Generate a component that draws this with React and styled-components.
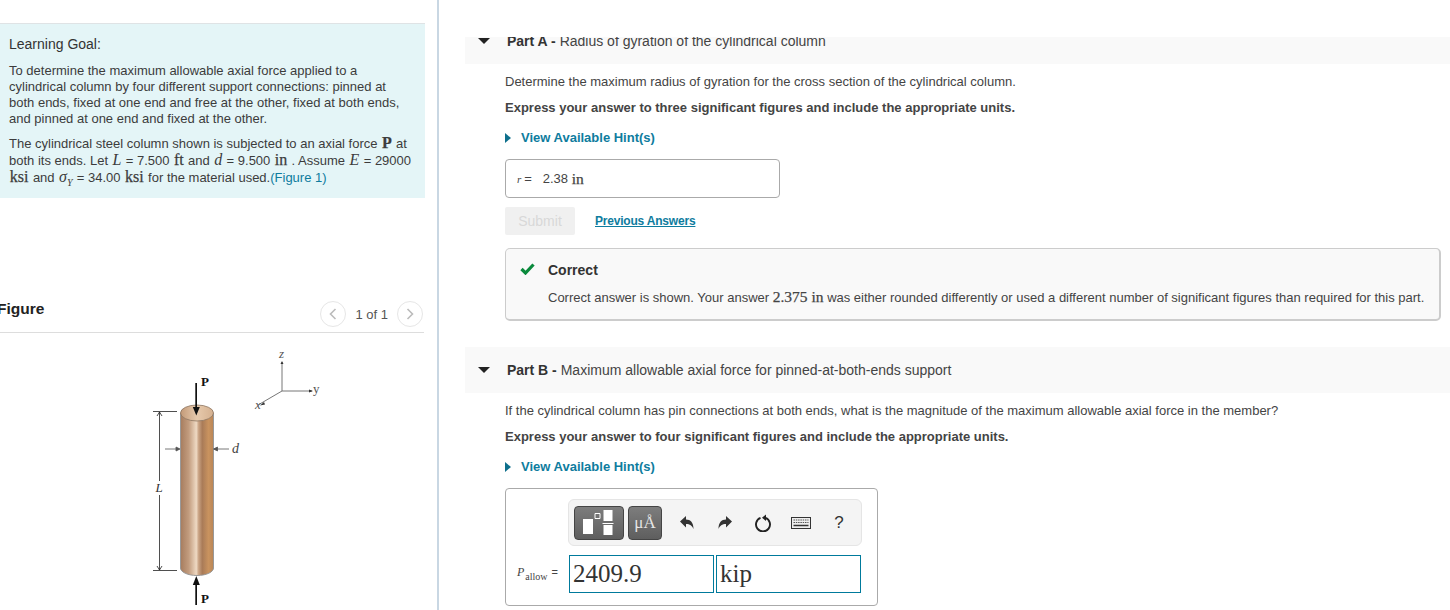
import React from 'react';
import styled, { createGlobalStyle } from 'styled-components';

const GlobalStyle = createGlobalStyle`
  html, body {
    margin: 0;
    padding: 0;
    background: #fff;
    overflow: hidden;
  }
  body {
    font-family: "Liberation Sans", Arial, sans-serif;
    font-size: 13px;
    color: #333;
  }
`;

const Page = styled.div`
  display: flex;
  width: 1450px;
  height: 610px;
  overflow: hidden;
`;

const LeftPane = styled.div`
  width: 437px;
  flex: none;
  padding-top: 23px;
  border-right: 2px solid #c9d7e3;
`;

const Goal = styled.div`
  width: 425px;
  height: 175px;
  box-sizing: border-box;
  background: #e4f5f7;
  border-top: 1px solid #dfe3e5;
  padding: 12px 12px 0 9px;
  line-height: 16px;
`;

const GoalTitle = styled.div`
  font-size: 14px;
  line-height: 16px;
  margin-bottom: 11px;
  color: #333;
`;

const GoalText = styled.p`
  margin: 0 0 8px;
  line-height: ${(p) => p.$leading || 16}px;
  color: #3c3c3c;
`;

const M = styled.span`
  font-family: "Liberation Serif", serif;
  font-size: ${(p) => (p.$inline ? 15.5 : 16)}px;
  font-style: ${(p) => (p.$roman ? 'normal' : 'italic')};
  font-weight: ${(p) => (p.$bold ? 700 : 400)};
  line-height: 0;
  margin: 0 ${(p) => (p.$inline ? 0 : 0.8)}px;
  -webkit-text-stroke: ${(p) => (p.$roman ? '0.25px' : '0')};
`;

const Sub = styled.sub`
  font-size: 10px;
  line-height: 0;
`;

const Link = styled.a`
  color: #0e7c9e;
`;

const FigureHead = styled.div`
  width: 427px;
  margin-left: -3px;
  height: 36px;
  margin-top: 99px;
  border-bottom: 1px solid #ddd;
  display: flex;
  align-items: center;
  justify-content: space-between;
  box-sizing: border-box;
`;

const FigureTitle = styled.div`
  font-size: 15.5px;
  font-weight: 700;
  color: #222;
  margin-top: -12px;
`;

const Pager = styled.div`
  display: flex;
  align-items: center;
  gap: 9px;
  color: #555;
  margin-top: -1px;
  margin-right: 1px;
`;

const PagerButton = styled.span`
  width: 26px;
  height: 26px;
  box-sizing: border-box;
  border: 1px solid #e6e6e6;
  border-radius: 50%;
  display: flex;
  align-items: center;
  justify-content: center;
`;

const FigureBody = styled.div`
  padding: 7px 0 0 120px;
`;

const RightPane = styled.div`
  flex: 1;
  margin-top: 37px;
  padding-left: 26px;
  overflow: hidden;
`;

const PartHead = styled.div`
  height: 46px;
  margin-top: ${(p) => p.$top}px;
  background: #f9f9f9;
  display: flex;
  align-items: center;
  font-size: 14px;
  color: #444;
`;

const PartCaret = styled.span`
  width: 0;
  height: 0;
  margin: 0 17px 0 13px;
  border-left: 6px solid transparent;
  border-right: 6px solid transparent;
  border-top: 6px solid #222;
`;

const PartLabel = styled.b`
  color: #333;
  white-space: pre;
`;

const PartBody = styled.div`
  padding-left: 40px;
`;

const Prompt = styled.div`
  margin-top: 10px;
  line-height: 16px;
  color: #444;
`;

const Instruction = styled.div`
  margin-top: 10px;
  font-weight: 700;
  line-height: 16px;
  color: #444;
`;

const Hint = styled.div`
  margin-top: 14px;
  display: flex;
  align-items: center;
  gap: 10px;
  font-weight: 700;
  line-height: 16px;
  color: #0e7c9e;
`;

const HintCaret = styled.span`
  width: 0;
  height: 0;
  border-top: 5px solid transparent;
  border-bottom: 5px solid transparent;
  border-left: 6px solid #0e6f8c;
`;

const AnswerField = styled.div`
  margin-top: 13px;
  width: 275px;
  height: 39px;
  box-sizing: border-box;
  border: 1px solid #aaa;
  border-radius: 4px;
  display: flex;
  align-items: center;
  padding-left: 11px;
  color: #444;
  white-space: pre;
`;

const SmallVar = styled.i`
  font-family: "Liberation Serif", serif;
  font-size: 11px;
  margin-right: 3px;
`;

const Actions = styled.div`
  margin-top: 9px;
  display: flex;
  align-items: center;
  gap: 20px;
`;

const SubmitButton = styled.span`
  width: 70px;
  height: 28px;
  background: #f0f0f0;
  border-radius: 2px;
  color: #d8d8d8;
  font-size: 14px;
  display: flex;
  align-items: center;
  justify-content: center;
`;

const PrevLink = styled.a`
  color: #0e7c9e;
  font-size: 12px;
  font-weight: 700;
  letter-spacing: -0.2px;
  text-decoration: underline;
`;

const Feedback = styled.div`
  margin-top: 13px;
  width: 936px;
  height: 73px;
  box-sizing: border-box;
  background: #f9f9f9;
  border: 1px solid #ccc;
  border-right-width: 2px;
  border-bottom-width: 2px;
  border-radius: 5px;
  display: grid;
  grid-template-columns: 28px 1fr;
  padding: 13px 0 0 14px;
`;

const CheckSlot = styled.div`
  padding-top: 1px;
`;

const FeedbackTitle = styled.div`
  font-weight: 700;
  font-size: 14px;
  line-height: 16px;
  color: #333;
`;

const FeedbackText = styled.div`
  margin-top: 12px;
  line-height: 16px;
  color: #444;
  white-space: nowrap;
`;

const AnswerBox = styled.div`
  margin-top: 13px;
  width: 373px;
  height: 118px;
  box-sizing: border-box;
  border: 1px solid #aaa;
  border-radius: 4px;
  display: grid;
  grid-template-columns: 62px 294px;
  grid-template-rows: 47px 38px;
  row-gap: 9px;
  padding-top: 10px;
`;

const Toolbar = styled.div`
  grid-column: 2;
  box-sizing: border-box;
  background: #f4f4f4;
  border: 1px solid #e5e5e5;
  border-radius: 6px;
  display: flex;
  align-items: center;
  padding-left: 5px;
`;

const ToolButton = styled.span`
  width: ${(p) => p.$w}px;
  height: 34px;
  box-sizing: border-box;
  margin-right: ${(p) => p.$gap}px;
  border: 1px solid #444;
  border-radius: 4px;
  background: linear-gradient(#7d7d7d, #5e5e5e);
  color: #e6e6e6;
  font-family: "Liberation Serif", serif;
  font-size: 17px;
  display: flex;
  align-items: center;
  justify-content: center;
`;

const ToolIcon = styled.span`
  width: 38px;
  flex: none;
  display: flex;
  align-items: center;
  justify-content: center;
  color: #333;
  font-size: 17px;
`;

const RowLabel = styled.div`
  display: flex;
  align-items: center;
  justify-content: flex-end;
  padding: 0 10px 4px 0;
  font-size: 11px;
  color: #444;
  white-space: nowrap;
`;

const LabelVar = styled.i`
  font-family: "Liberation Serif", serif;
  font-size: 12px;
`;

const LabelSub = styled.span`
  font-family: "Liberation Serif", serif;
  font-size: 10px;
  position: relative;
  top: 4px;
  margin: 0 4px 0 1px;
`;

const InputRow = styled.div`
  display: flex;
  gap: 2px;
  margin-left: 1px;
`;

const MathInput = styled.div`
  width: 145px;
  height: 38px;
  box-sizing: border-box;
  border: 1px solid #007a9c;
  padding-left: 3px;
  font-family: "Liberation Serif", serif;
  font-size: 25px;
  line-height: 36px;
  color: #333;
`;

const Column = () => (
  <svg width="220" height="270" viewBox="120 340 220 270" fontFamily="Liberation Serif, serif">
    <defs>
      <linearGradient id="rod" x1="0" x2="1" y1="0" y2="0">
        <stop offset="0" stopColor="#a67c5e" />
        <stop offset="0.25" stopColor="#c29c7e" />
        <stop offset="0.48" stopColor="#eed9c3" />
        <stop offset="0.55" stopColor="#c9a384" />
        <stop offset="0.66" stopColor="#a97b58" />
        <stop offset="0.85" stopColor="#c9935f" />
        <stop offset="1" stopColor="#b98556" />
      </linearGradient>
      <linearGradient id="cap" x1="0" x2="1" y1="0" y2="0">
        <stop offset="0" stopColor="#c39a78" />
        <stop offset="0.5" stopColor="#e6c9ac" />
        <stop offset="1" stopColor="#d5b190" />
      </linearGradient>
    </defs>
    <path d="M180.500 413v155c0 4 7 7.500 16.500 7.500s16.500-3.500 16.500-7.500v-155z" fill="url(#rod)" stroke="#999" />
    <ellipse cx="197" cy="413" rx="16.500" ry="8" fill="url(#cap)" stroke="#8d7662" strokeWidth="0.8" />
    <path d="M195.300 383h1.700v28h-1.700z" fill="#111" />
    <path d="M192.800 407h7l-3.500 8.500z" fill="#111" />
    <path d="M195.300 584h1.700v21h-1.700z" fill="#111" />
    <path d="M192.800 585h7l-3.500-9z" fill="#111" />
    <text x="201" y="386" fontSize="13" fontWeight="700" fill="#111">P</text>
    <text x="201" y="603" fontSize="13" fontWeight="700" fill="#111">P</text>
    <g stroke="#222" strokeWidth="0.8" fill="none">
      <path d="M153 411.500h24M153 570.500h24" />
      <path d="M159.500 412v69M159.500 495v75" />
      <path d="M157 416l2.500-4 2.500 4M157 566l2.500 4 2.500-4" />
    </g>
    <text x="155.500" y="492" fontSize="13" fontStyle="italic" fill="#333">L</text>
    <g stroke="#555" strokeWidth="0.8" fill="#555">
      <path d="M165 449h14M229 449h-15" />
      <path d="M180 449l-4-2v4zM213.500 449l4-2v4z" />
    </g>
    <text x="232" y="453" fontSize="14" fontStyle="italic" fill="#444">d</text>
    <g stroke="#666" strokeWidth="0.9" fill="#333">
      <path d="M282 391v-29M282 391h30M282 391l-24 14" fill="none" />
      <path d="M282 361l-1.500 3h3zM313 391l-4-1.500v3zM264 402l-4 3.500 5-1z" stroke="none" />
    </g>
    <text x="279" y="358" fontSize="13" fontStyle="italic" fill="#555">z</text>
    <text x="313" y="393" fontSize="13" fill="#555">y</text>
    <text x="255" y="409" fontSize="13" fontStyle="italic" fill="#555">x</text>
  </svg>
);

const Chevron = ({ right }) => (
  <svg width="8" height="12" viewBox="0 0 8 12" fill="none" stroke="#bbb" strokeWidth="1.6">
    <path d={right ? 'M1.500 1l5 5-5 5' : 'M6.500 1l-5 5 5 5'} />
  </svg>
);

const TemplateGlyph = () => (
  <svg width="32" height="28" viewBox="0 0 32 28">
    <path d="M0 10h10v15H0z" fill="#fff" />
    <path d="M12 4.500h5v5h-5z" fill="none" stroke="#fff" />
    <path d="M20.500 1h9v11h-9zM20.500 16h9v10h-9z" fill="#fff" />
    <path d="M19.500 14.500h11" stroke="#fff" />
  </svg>
);

const UndoIcon = ({ flip }) => (
  <svg width="14" height="14" viewBox="0 0 14 14" style={flip ? { transform: 'scaleX(-1)' } : undefined}>
    <path d="M0 5.500L6 0v3.500c4.500 0 7.500 3 7.500 9.500-1.500-3.500-3.500-5-7.500-5v3.500z" fill="#333" />
  </svg>
);

const ResetIcon = () => (
  <svg width="17" height="18" viewBox="0 0 17 18" fill="none">
    <path d="M5.500 3.900a7 7 0 1 0 5 0" stroke="#222" strokeWidth="1.900" />
    <path d="M10 0.500v6.500l-4-3.300z" fill="#222" transform="translate(1 0)" />
  </svg>
);

const KeyboardIcon = () => (
  <svg width="20" height="12" viewBox="0 0 20 12">
    <rect x="0.500" y="0.500" width="19" height="11" fill="#eee" stroke="#333" />
    <path d="M2.500 3h15M2.500 5.500h15" stroke="#555" strokeDasharray="1.500 .8" />
    <path d="M2.500 8.500h15" stroke="#333" strokeWidth="1.500" />
  </svg>
);

const CheckIcon = () => (
  <svg width="15" height="12" viewBox="0 0 15 12">
    <path d="M1.500 6l4 4 8-8.500" fill="none" stroke="#0a8a3c" strokeWidth="3.200" />
  </svg>
);

export default function App() {
  return (
    <Page>
      <GlobalStyle />
      <LeftPane>
        <Goal>
          <GoalTitle>Learning Goal:</GoalTitle>
          <GoalText>
            To determine the maximum allowable axial force applied to a cylindrical column by four
            different support connections: pinned at both ends, fixed at one end and free at the
            other, fixed at both ends, and pinned at one end and fixed at the other.
          </GoalText>
          <GoalText $leading={17}>
            The cylindrical steel column shown is subjected to an axial force <M $roman $bold>P</M> at
            both its ends. Let <M>L</M> = 7.500 <M $roman>ft</M> and <M>d</M> = 9.500 <M $roman>in</M> .
            Assume <M>E</M> = 29000 <M $roman>ksi</M> and <M>σ<Sub>Y</Sub></M> = 34.00{' '}
            <M $roman>ksi</M> for the material used.<Link>(Figure 1)</Link>
          </GoalText>
        </Goal>
        <FigureHead>
          <FigureTitle>Figure</FigureTitle>
          <Pager>
            <PagerButton><Chevron /></PagerButton>
            <span>1 of 1</span>
            <PagerButton><Chevron right /></PagerButton>
          </Pager>
        </FigureHead>
        <FigureBody>
          <Column />
        </FigureBody>
      </LeftPane>

      <RightPane>
        <PartHead $top={-19}>
          <PartCaret />
          <span><PartLabel>Part A - </PartLabel>Radius of gyration of the cylindrical column</span>
        </PartHead>
        <PartBody>
          <Prompt>Determine the maximum radius of gyration for the cross section of the cylindrical column.</Prompt>
          <Instruction>Express your answer to three significant figures and include the appropriate units.</Instruction>
          <Hint><HintCaret />View Available Hint(s)</Hint>
          <AnswerField>
            <SmallVar>r</SmallVar>{'=   2.38 '}<M $roman $inline>in</M>
          </AnswerField>
          <Actions>
            <SubmitButton>Submit</SubmitButton>
            <PrevLink>Previous Answers</PrevLink>
          </Actions>
          <Feedback>
            <CheckSlot><CheckIcon /></CheckSlot>
            <div>
              <FeedbackTitle>Correct</FeedbackTitle>
              <FeedbackText>
                Correct answer is shown. Your answer <M $roman $inline>2.375 in</M> was either rounded differently or used a different number of significant figures than required for this part.
              </FeedbackText>
            </div>
          </Feedback>
        </PartBody>

        <PartHead $top={26}>
          <PartCaret />
          <span><PartLabel>Part B - </PartLabel>Maximum allowable axial force for pinned-at-both-ends support</span>
        </PartHead>
        <PartBody>
          <Prompt>If the cylindrical column has pin connections at both ends, what is the magnitude of the maximum allowable axial force in the member?</Prompt>
          <Instruction>Express your answer to four significant figures and include the appropriate units.</Instruction>
          <Hint><HintCaret />View Available Hint(s)</Hint>
          <AnswerBox>
            <Toolbar>
              <ToolButton $w={50} $gap={4}><TemplateGlyph /></ToolButton>
              <ToolButton $w={34} $gap={6}>μÅ</ToolButton>
              <ToolIcon><UndoIcon /></ToolIcon>
              <ToolIcon><UndoIcon flip /></ToolIcon>
              <ToolIcon><ResetIcon /></ToolIcon>
              <ToolIcon><KeyboardIcon /></ToolIcon>
              <ToolIcon>?</ToolIcon>
            </Toolbar>
            <RowLabel>
              <LabelVar>P</LabelVar><LabelSub>allow</LabelSub>=
            </RowLabel>
            <InputRow>
              <MathInput>2409.9</MathInput>
              <MathInput>kip</MathInput>
            </InputRow>
          </AnswerBox>
        </PartBody>
      </RightPane>
    </Page>
  );
}
